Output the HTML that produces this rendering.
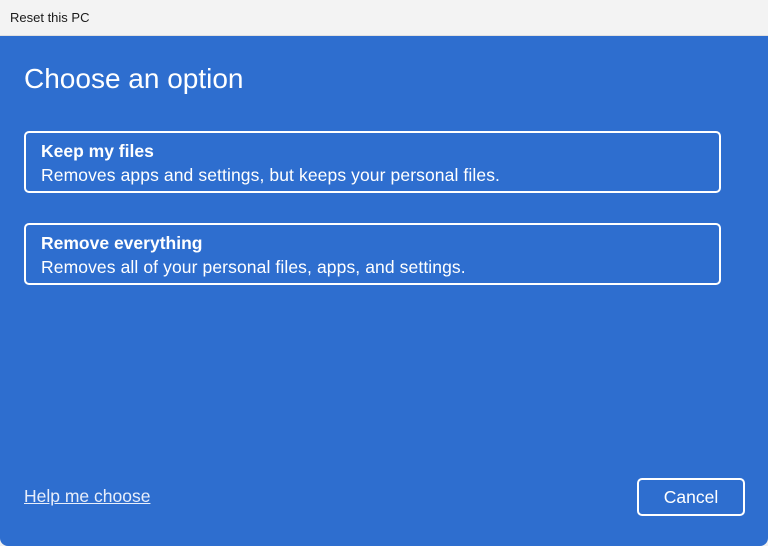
<!DOCTYPE html>
<html><head><style>
body{margin:0;width:768px;height:546px;overflow:hidden;background:#f0f0f0;font-family:"Liberation Sans",sans-serif;}
.title{position:absolute;left:0;top:0;width:768px;height:36px;background:#f3f3f3;border-bottom:1px solid #e0e0e0;box-sizing:border-box}
.title span{position:absolute;left:10px;top:10px;font-size:13px;color:#1a1a1a}
.main{position:absolute;left:0;top:36px;width:768px;height:510px;background:#2e6ecf;border-radius:0 0 8px 8px;color:#fff}
h1{position:absolute;left:24px;top:27px;margin:0;font-weight:normal;font-size:28px;}
.opt{position:absolute;left:24px;width:697px;height:62px;border:2px solid #fff;border-radius:5px;box-sizing:border-box}
.opt b{position:absolute;left:15px;top:8px;font-size:17.5px}
.opt div{position:absolute;left:15px;top:32px;font-size:17.5px;letter-spacing:0.1px}
.help{position:absolute;left:24px;top:450px;font-size:17.5px;text-decoration:underline;color:#e8eefa}
.cancel{position:absolute;left:637px;top:442px;width:108px;height:38px;border:2px solid #fff;border-radius:5px;box-sizing:border-box;text-align:center;line-height:34px;font-size:17.5px}
</style></head><body>
<div class="title"><span>Reset this PC</span></div>
<div class="main">
<h1>Choose an option</h1>
<div class="opt" style="top:95px"><b>Keep my files</b><div>Removes apps and settings, but keeps your personal files.</div></div>
<div class="opt" style="top:187px"><b>Remove everything</b><div>Removes all of your personal files, apps, and settings.</div></div>
<div class="help">Help me choose</div>
<div class="cancel">Cancel</div>
</div>
</body></html>
